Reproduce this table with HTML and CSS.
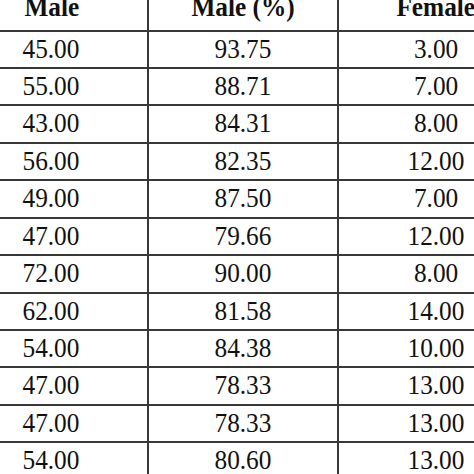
FILE: index.html
```html
<!DOCTYPE html>
<html>
<head>
<meta charset="utf-8">
<link rel="stylesheet" href="styles.css">
</head>
<body>
<div class="table">
  <div class="row head">
    <div class="cell c1"><span>Male</span></div>
    <div class="cell c2"><span>Male (%)</span></div>
    <div class="cell c3"><span>Female</span></div>
  </div>
  <div class="row"><div class="cell c1"><span>45.00</span></div><div class="cell c2"><span>93.75</span></div><div class="cell c3"><span>3.00</span></div></div>
  <div class="row"><div class="cell c1"><span>55.00</span></div><div class="cell c2"><span>88.71</span></div><div class="cell c3"><span>7.00</span></div></div>
  <div class="row"><div class="cell c1"><span>43.00</span></div><div class="cell c2"><span>84.31</span></div><div class="cell c3"><span>8.00</span></div></div>
  <div class="row"><div class="cell c1"><span>56.00</span></div><div class="cell c2"><span>82.35</span></div><div class="cell c3"><span>12.00</span></div></div>
  <div class="row"><div class="cell c1"><span>49.00</span></div><div class="cell c2"><span>87.50</span></div><div class="cell c3"><span>7.00</span></div></div>
  <div class="row"><div class="cell c1"><span>47.00</span></div><div class="cell c2"><span>79.66</span></div><div class="cell c3"><span>12.00</span></div></div>
  <div class="row"><div class="cell c1"><span>72.00</span></div><div class="cell c2"><span>90.00</span></div><div class="cell c3"><span>8.00</span></div></div>
  <div class="row"><div class="cell c1"><span>62.00</span></div><div class="cell c2"><span>81.58</span></div><div class="cell c3"><span>14.00</span></div></div>
  <div class="row"><div class="cell c1"><span>54.00</span></div><div class="cell c2"><span>84.38</span></div><div class="cell c3"><span>10.00</span></div></div>
  <div class="row"><div class="cell c1"><span>47.00</span></div><div class="cell c2"><span>78.33</span></div><div class="cell c3"><span>13.00</span></div></div>
  <div class="row"><div class="cell c1"><span>47.00</span></div><div class="cell c2"><span>78.33</span></div><div class="cell c3"><span>13.00</span></div></div>
  <div class="row"><div class="cell c1"><span>54.00</span></div><div class="cell c2"><span>80.60</span></div><div class="cell c3"><span>13.00</span></div></div>
</div>
</body>
</html>
```

FILE: styles.css
```css
html, body {
  margin: 0;
  padding: 0;
  background: #ffffff;
  overflow: hidden;
  width: 474px;
  height: 474px;
}
.table {
  margin-left: -44px;
  width: 580px;
  font-family: "Liberation Serif", "Times New Roman", serif;
  font-size: 27.5px;
  color: #111111;
}
.row {
  display: flex;
  height: 35.45px;
  line-height: 34.4px;
  border-bottom: 2px solid #383838;
}
.row.head {
  height: 29.5px;
  line-height: 14.84px;
  font-weight: bold;
}
.cell {
  text-align: center;
  white-space: nowrap;
}
.cell span {
  display: inline-block;
  transform: scaleX(0.92);
}
.c1 {
  width: 190.7px;
  border-right: 2px solid #383838;
}
.c2 {
  width: 188.6px;
  border-right: 2px solid #383838;
}
.c3 {
  width: 193px;
}
```
